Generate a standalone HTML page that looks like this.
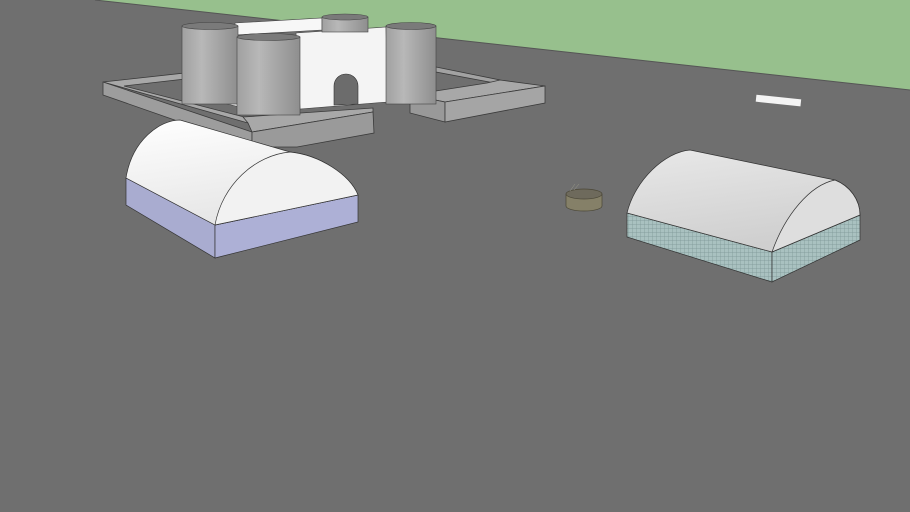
<!DOCTYPE html>
<html><head><style>html,body{margin:0;padding:0;background:#6f6f6f}svg{display:block}</style></head>
<body>
<svg width="910" height="512" viewBox="0 0 910 512" xmlns="http://www.w3.org/2000/svg">
<defs>
<linearGradient id="cyl" x1="0" x2="1"><stop offset="0" stop-color="#a0a0a0"/><stop offset=".35" stop-color="#b8b8b8"/><stop offset="1" stop-color="#8e8e8e"/></linearGradient>
<linearGradient id="roof1" x1="0" y1="0" x2="0.3" y2="1"><stop offset="0" stop-color="#ffffff"/><stop offset="1" stop-color="#e6e6e6"/></linearGradient>
<linearGradient id="roof2" x1="0" y1="0" x2="0.3" y2="1"><stop offset="0" stop-color="#e8e8e8"/><stop offset="1" stop-color="#cfcfcf"/></linearGradient>
<pattern id="grid" width="4" height="4" patternUnits="userSpaceOnUse"><rect width="4" height="4" fill="#a9c1c0"/><path d="M0 0H4M0 0V4" stroke="#7b9594" stroke-width=".7"/></pattern>
</defs>
<rect width="910" height="512" fill="#6f6f6f"/>
<polygon points="95,0 910,0 910,90" fill="#97c08d"/>
<line x1="95" y1="0" x2="910" y2="90" stroke="#555" stroke-width="1"/>
<rect x="756" y="97" width="45" height="7" fill="#f4f4f4" transform="rotate(6 778 100)"/>
<!-- castle walls -->
<polygon points="103,82 185,73 185,79 124,86 248,118 248,123" fill="#a8a8a8" stroke="#3a3a3a" stroke-width=".8"/>
<polygon points="103,82 252,132 252,147 103,95" fill="#9d9d9d" stroke="#3a3a3a" stroke-width=".8"/>
<polygon points="243,117 373,108 373,112 252,132 248,123" fill="#a8a8a8" stroke="#3a3a3a" stroke-width=".8"/>
<polygon points="252,132 373,112 374,133 297,147 252,147" fill="#9a9a9a" stroke="#3a3a3a" stroke-width=".8"/>
<polygon points="436,67 500,80 500,84 436,72" fill="#a2a2a2" stroke="#3a3a3a" stroke-width=".8"/>
<polygon points="410,95 487,83 500,80 545,86 445,102" fill="#a8a8a8" stroke="#3a3a3a" stroke-width=".8"/>
<polygon points="410,95 445,102 445,122 410,113" fill="#999" stroke="#3a3a3a" stroke-width=".8"/>
<polygon points="445,102 545,86 545,103 445,122" fill="#a5a5a5" stroke="#3a3a3a" stroke-width=".8"/>
<!-- white walls -->
<polygon points="235,23 322,18 322,30 235,35" fill="#f7f7f7" stroke="#444" stroke-width=".6"/>
<polygon points="296,33 386,27 388,102 300,109" fill="#f4f4f4" stroke="#444" stroke-width=".6"/>
<polygon points="223,56 240,60 244,108 227,104" fill="#eeeeee" stroke="#444" stroke-width=".6"/>
<path d="M334,105 V86 A12,12 0 0 1 358,86 V104 Z" fill="#6c6c6c" stroke="#333" stroke-width=".6"/>
<!-- towers -->
<rect x="322" y="17" width="46" height="15" fill="url(#cyl)" stroke="#444" stroke-width=".6"/>
<ellipse cx="345" cy="17" rx="23" ry="3" fill="#7a7a7a" stroke="#444" stroke-width=".6"/>
<rect x="182" y="26" width="56" height="78" fill="url(#cyl)" stroke="#444" stroke-width=".6"/>
<ellipse cx="210" cy="26" rx="28" ry="3.5" fill="#7a7a7a" stroke="#444" stroke-width=".6"/>
<rect x="386" y="26" width="50" height="78" fill="url(#cyl)" stroke="#444" stroke-width=".6"/>
<ellipse cx="411" cy="26" rx="25" ry="3.5" fill="#7a7a7a" stroke="#444" stroke-width=".6"/>
<rect x="237" y="37" width="63" height="78" fill="url(#cyl)" stroke="#444" stroke-width=".6"/>
<ellipse cx="268.5" cy="37" rx="31.5" ry="3.5" fill="#7a7a7a" stroke="#444" stroke-width=".6"/>
<!-- left hangar -->
<polygon points="126,178 215,225 215,258 126,205" fill="#a9acd0" stroke="#333" stroke-width=".7"/>
<polygon points="215,225 358,195 358,222 215,258" fill="#adb0d6" stroke="#333" stroke-width=".7"/>
<path d="M126,178 C132,140 160,120 180,120 L290,152 C320,155 350,175 358,195 L215,225 Z" fill="url(#roof1)" stroke="#333" stroke-width=".7"/>
<path d="M215,225 C222,185 255,155 290,152 C320,155 350,175 358,195 Z" fill="#f2f2f2" stroke="#333" stroke-width=".7"/>
<!-- barrel -->
<path d="M566,194 V206 A18,5 0 0 0 602,206 V194" fill="#858068" stroke="#4a4636" stroke-width=".7"/>
<ellipse cx="584" cy="194" rx="18" ry="5" fill="#6e6a5c" stroke="#4a4636" stroke-width=".7"/>
<path d="M570,191 L575,184 M574,190 L579,184" stroke="#998" stroke-width=".5"/>
<!-- right hangar -->
<polygon points="627,213 772,252 772,282 627,237" fill="url(#grid)" stroke="#333" stroke-width=".7"/>
<polygon points="772,252 860,215 860,240 772,282" fill="url(#grid)" stroke="#333" stroke-width=".7"/>
<path d="M627,213 C635,180 665,152 690,150 L835,180 C850,186 860,200 860,215 L772,252 Z" fill="url(#roof2)" stroke="#333" stroke-width=".7"/>
<path d="M772,252 C785,215 810,185 835,180 C850,186 860,200 860,215 Z" fill="#dedede" stroke="#333" stroke-width=".7"/>
</svg>
</body></html>
